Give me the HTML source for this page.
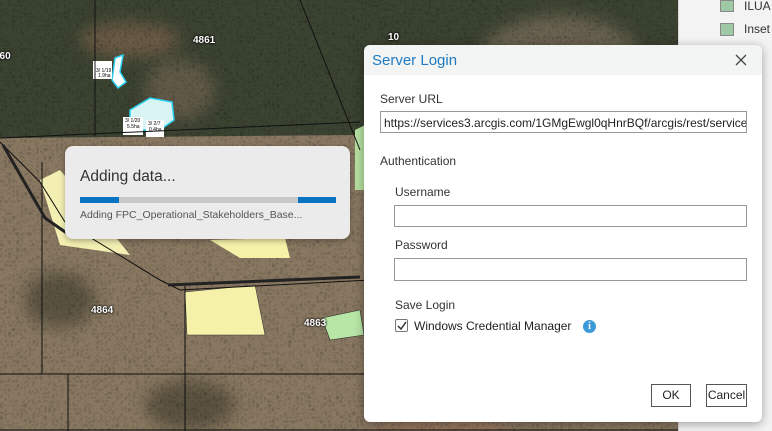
<!DOCTYPE html>
<html><head><meta charset="utf-8"><style>
*{margin:0;padding:0;box-sizing:border-box}
body{width:772px;height:431px;overflow:hidden;position:relative;font-family:"Liberation Sans",sans-serif;background:#7a6c55}
.a{position:absolute}
.t{position:absolute;white-space:nowrap;color:#333}
.lbl{position:absolute;color:#fff;font-size:10px;font-weight:bold;text-shadow:0 0 2px #000,0 0 2px #000}
</style></head><body>
<svg class="a" style="left:0;top:0" width="680" height="431">
<defs>
<filter id="n"><feTurbulence baseFrequency="0.25" numOctaves="2" seed="3"/><feColorMatrix values="0 0 0 0 0  0 0 0 0 0  0 0 0 0 0  0 0 0 .35 -0.05"/></filter>
<filter id="b"><feGaussianBlur stdDeviation="8"/></filter>
</defs>
<rect width="680" height="431" fill="#8a7962"/>
<polygon points="0,0 680,0 680,70 600,110 520,130 360,135 0,138" fill="#3b4331"/>
<g filter="url(#b)" opacity=".6">
<ellipse cx="130" cy="40" rx="50" ry="18" fill="#8a6a52"/>
<ellipse cx="180" cy="90" rx="35" ry="30" fill="#7d6a58"/>
<ellipse cx="560" cy="60" rx="80" ry="45" fill="#8a7866"/>
<ellipse cx="60" cy="300" rx="35" ry="28" fill="#3a3a2a"/>
<ellipse cx="190" cy="405" rx="45" ry="25" fill="#3c3a2c"/>
<ellipse cx="540" cy="300" rx="70" ry="35" fill="#6f7858"/>
<ellipse cx="440" cy="420" rx="70" ry="20" fill="#a07860"/>
</g>
<rect width="680" height="431" filter="url(#n)"/>
<polygon points="185,292 255,285 265,335 187,335" fill="#f6f1a8" stroke="#333" stroke-width=".5"/>
<polygon points="40,180 60,170 110,230 130,255 60,245" fill="#f3efb2"/>
<polygon points="210,240 285,238 290,258 240,258" fill="#f6f1a8"/>
<polygon points="355,130 365,125 365,190 355,190" fill="#b7e0a0"/>
<polygon points="322,318 360,310 364,335 330,340" fill="#b8e6a6" stroke="#333" stroke-width=".6"/>
<polygon points="115,58 123,55 120,72 126,82 118,88 112,80" fill="#fff" stroke="#2bd0f0" stroke-width="1.5"/>
<polygon points="130,110 150,98 172,102 174,120 160,130 130,130" fill="#d8f4f4" stroke="#2bd0f0" stroke-width="1.5"/>
<rect x="93" y="61" width="19" height="18" fill="#fff"/>
<rect x="123" y="117" width="20" height="18" fill="#fff"/>
<rect x="146" y="120" width="18" height="17" fill="#fff"/>
<g stroke="#111" stroke-width="1" fill="none">
<path d="M95,0 V136 M0,138 L360,122 M0,142 L40,182 L65,222 L160,280 L180,290 L370,280"/>
<path d="M300,0 L360,150"/>
<path d="M0,374 H680 M42,162 V374 M185,286 V431 M68,374 V431 M0,430 H680"/>
<path d="M3,145 L45,218 L68,234 M168,285 L360,277" stroke-width="3" stroke="#222"/>
</g>
<text x="96" y="72" font-size="5" fill="#000">3/ 1/19</text><text x="98" y="77" font-size="5">1.9ha</text>
<text x="125" y="122" font-size="5">3/ 1/20</text><text x="127" y="128" font-size="5">5.5ha</text>
<text x="148" y="125" font-size="5">3/ 2/7</text><text x="149" y="131" font-size="5">0.4ha</text>
</svg>
<div class="lbl" style="left:193px;top:35px">4861</div>
<div class="lbl" style="left:-6px;top:51px">360</div>
<div class="lbl" style="left:388px;top:32px">10</div>
<div class="lbl" style="left:91px;top:305px">4864</div>
<div class="lbl" style="left:304px;top:318px">4863</div>

<div class="a" style="left:678px;top:0;width:94px;height:431px;background:#f3f3f3;border-left:1px solid #d8d8d8"></div>
<div class="a" style="left:720px;top:0;width:14px;height:12px;background:#9fc9a4;border:1px solid #888"></div>
<div class="t" style="left:744px;top:-1px;font-size:12px">ILUA</div>
<div class="a" style="left:720px;top:23px;width:14px;height:13px;background:#9fc9a4;border:1px solid #888"></div>
<div class="t" style="left:744px;top:22px;font-size:12px">Inset</div>

<div class="a" style="left:65px;top:146px;width:285px;height:93px;background:#ebebeb;border-radius:8px;box-shadow:0 2px 6px rgba(0,0,0,.3)"></div>
<div class="t" style="left:80px;top:168px;font-size:15.5px;color:#333">Adding data...</div>
<div class="a" style="left:80px;top:197px;width:256px;height:6px;background:#c8c8c8"></div>
<div class="a" style="left:80px;top:197px;width:39px;height:6px;background:#0a74c4"></div>
<div class="a" style="left:298px;top:197px;width:38px;height:6px;background:#0a74c4"></div>
<div class="t" style="left:80px;top:209px;font-size:10.5px;color:#555">Adding FPC_Operational_Stakeholders_Base...</div>

<div class="a" style="left:364px;top:45px;width:398px;height:377px;background:#fff;border-radius:6px;box-shadow:0 2px 10px rgba(0,0,0,.35);overflow:hidden">
<div class="a" style="left:0;top:0;width:398px;height:30px;background:#f3f5f5"></div>
<div class="t" style="left:8px;top:7px;font-size:15px;color:#1f7ac2">Server Login</div>
<svg class="a" style="left:371px;top:9px" width="12" height="12"><path d="M1,1 L11,11 M11,1 L1,11" stroke="#444" stroke-width="1.3"/></svg>
<div class="t" style="left:16px;top:47px;font-size:12px">Server URL</div>
<div class="a" style="left:16px;top:66px;width:367px;height:22px;border:1px solid #999;overflow:hidden"><div class="t" style="left:3px;top:4px;font-size:12px;color:#222">https://services3.arcgis.com/1GMgEwgl0qHnrBQf/arcgis/rest/services</div></div>
<div class="t" style="left:16px;top:109px;font-size:12px">Authentication</div>
<div class="t" style="left:31px;top:140px;font-size:12px">Username</div>
<div class="a" style="left:30px;top:160px;width:353px;height:22px;border:1px solid #999"></div>
<div class="t" style="left:31px;top:193px;font-size:12px">Password</div>
<div class="a" style="left:30px;top:213px;width:353px;height:23px;border:1px solid #999"></div>
<div class="t" style="left:31px;top:253px;font-size:12px">Save Login</div>
<div class="a" style="left:31px;top:274px;width:13px;height:13px;border:1px solid #777;border-radius:2px"></div>
<svg class="a" style="left:33px;top:276px" width="10" height="10"><path d="M1,5 L4,8 L9,1" stroke="#333" stroke-width="1.5" fill="none"/></svg>
<div class="t" style="left:50px;top:274px;font-size:12px;color:#222">Windows Credential Manager</div>
<div class="a" style="left:219px;top:275px;width:13px;height:13px;border-radius:50%;background:#3d9ad9;color:#fff;font-size:10px;font-weight:bold;text-align:center;line-height:13px;font-family:'Liberation Serif',serif">i</div>
<div class="a" style="left:287px;top:339px;width:40px;height:23px;border:1px solid #555;font-size:12px;text-align:center;line-height:21px;color:#222">OK</div>
<div class="a" style="left:342px;top:339px;width:41px;height:23px;border:1px solid #555;font-size:12px;text-align:center;line-height:21px;color:#222">Cancel</div>
</div>
</body></html>
